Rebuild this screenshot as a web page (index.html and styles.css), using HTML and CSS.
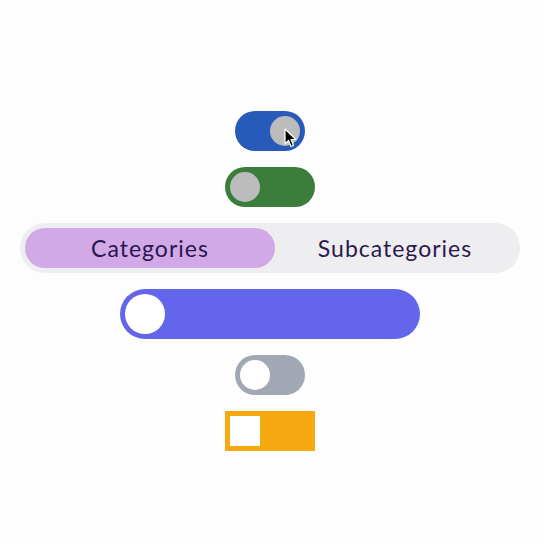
FILE: index.html
```html
<!DOCTYPE html>
<html>
<head>
<meta charset="utf-8">
<link rel="stylesheet" href="styles.css">
</head>
<body>
<main class="stack">
  <div class="toggle t-blue">
    <span class="knob"></span>
    <svg class="cursor" width="14" height="20" viewBox="0 0 14 20"><path d="M1 1 L1 16 L4.5 12.5 L7 18.5 L9.5 17.5 L7 11.5 L12 11.5 Z" fill="#000" stroke="#fff" stroke-width="1.2" stroke-linejoin="round"/></svg>
  </div>
  <div class="toggle t-green"><span class="knob"></span></div>
  <div class="segmented">
    <span class="seg active">Categories</span>
    <span class="seg">Subcategories</span>
  </div>
  <div class="toggle t-indigo"><span class="knob"></span></div>
  <div class="toggle t-grey"><span class="knob"></span></div>
  <div class="toggle t-orange"><span class="knob"></span></div>
</main>
</body>
</html>
```
FILE: styles.css
```css
html, body { margin: 0; padding: 0; }
body { background: #fdfdfd; width: 544px; height: 544px; font-family: "Lato", "Noto Sans", sans-serif; }
.stack { width: 540px; display: flex; flex-direction: column; align-items: center; gap: 16px; padding-top: 111px; }
.toggle { position: relative; display: flex; align-items: center; box-sizing: border-box; }
.knob { display: block; border-radius: 50%; }
.t-blue { width: 70px; height: 40px; border-radius: 20px; background: #285ab9; padding: 0 5px; justify-content: flex-end; }
.t-blue .knob { width: 30px; height: 30px; background: #bcbcbc; }
.cursor { position: absolute; left: 49px; top: 17px; }
.t-green { width: 90px; height: 40px; border-radius: 20px; background: #3b7d3a; padding: 0 5px; }
.t-green .knob { width: 30px; height: 30px; background: #bcbcbc; }
.segmented { width: 500px; height: 50px; box-sizing: border-box; padding: 5px; border-radius: 25px; background: #eeedef; display: flex; }
.seg { flex: 1; display: flex; align-items: center; justify-content: center; border-radius: 20px; font-size: 23px; color: #2c1a4e; letter-spacing: 1px; }
.seg.active { flex: 0 0 250px; background: #d0a9e6; color: #2a1650; }
.t-indigo { width: 300px; height: 50px; border-radius: 25px; background: #6366ea; padding: 0 5px; }
.t-indigo .knob { width: 40px; height: 40px; background: #fff; }
.t-grey { width: 70px; height: 40px; border-radius: 20px; background: #a1a8b4; padding: 0 5px; }
.t-grey .knob { width: 30px; height: 30px; background: #fff; }
.t-orange { width: 90px; height: 40px; background: #f6a811; padding: 0 5px; }
.t-orange .knob { width: 30px; height: 30px; background: #fff; border-radius: 0; }
```
